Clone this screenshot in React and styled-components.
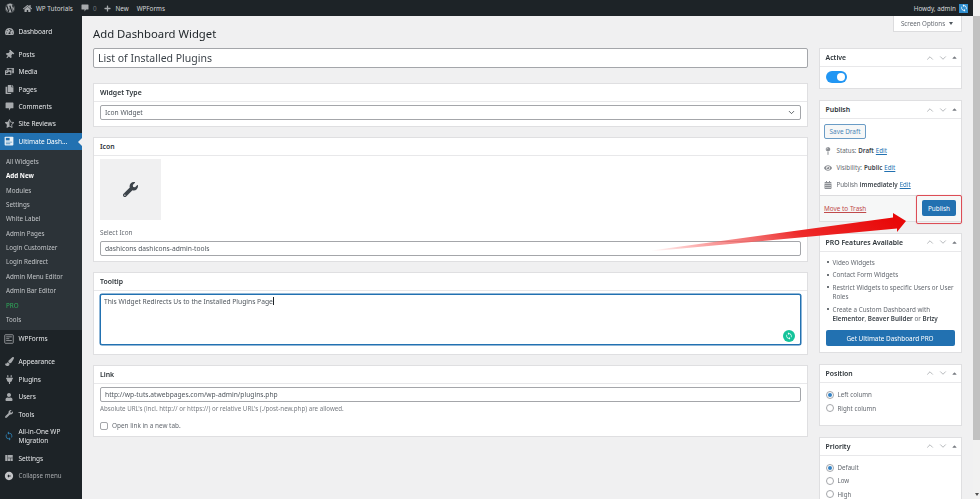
import React from "react";
import styled, { createGlobalStyle } from "styled-components";
import { ChevronUp, ChevronDown } from "lucide-react";
import {
  FaWordpress,
  FaHome,
  FaPlus,
  FaTachometerAlt,
  FaThumbtack,
  FaPhotoVideo,
  FaCopy,
  FaStarHalfAlt,
  FaWrench,
  FaPaintBrush,
  FaPlug,
  FaUser,
  FaEye,
  FaCalendarAlt,
  FaMapPin,
  FaCaretUp,
} from "react-icons/fa";
import { MdViewQuilt, MdSync, MdArrowCircleLeft } from "react-icons/md";

const GlobalStyle = createGlobalStyle`
  html, body { margin: 0; padding: 0; height: 499px; overflow: hidden; background: #f0f0f1; }
  body { font-family: "Noto Sans", "Open Sans", sans-serif; font-size: 7px; color: #3c434a; }
  * { box-sizing: border-box; }
`;

const CommentIcon = ({ size = 9 }) => (
  <svg viewBox="0 0 16 16" width={size} height={size} fill="currentColor">
    <path d="M2 1h12a1 1 0 0 1 1 1v8a1 1 0 0 1-1 1h-4l-3 4v-4H2a1 1 0 0 1-1-1V2a1 1 0 0 1 1-1z" />
  </svg>
);

const UltimateIcon = () => (
  <svg viewBox="0 0 16 16" width="10" height="10">
    <rect x="1" y="1" width="14" height="14" rx="1.5" fill="#e8f0f6" />
    <rect x="3" y="3" width="6" height="4" fill="#2271b1" />
    <path d="M3 9h10v1.4H3zM3 11.6h7V13H3z" fill="#5a93bf" />
  </svg>
);

const FormsIcon = () => (
  <svg viewBox="0 0 16 16" width="10" height="10" fill="none" stroke="currentColor" strokeWidth="1.3">
    <rect x="1.2" y="1.2" width="13.6" height="13.6" rx="1" />
    <path d="M3.5 4.5h9M3.5 7.5h5M3.5 10.5h9" />
  </svg>
);

const topMenu = [
  { label: "Posts", icon: <FaThumbtack size={9} />, tilt: true },
  { label: "Media", icon: <FaPhotoVideo size={9} /> },
  { label: "Pages", icon: <FaCopy size={9} /> },
  { label: "Comments", icon: <CommentIcon /> },
  { label: "Site Reviews", icon: <FaStarHalfAlt size={9} /> },
];

const subMenu = [
  "All Widgets",
  "Add New",
  "Modules",
  "Settings",
  "White Label",
  "Admin Pages",
  "Login Customizer",
  "Login Redirect",
  "Admin Menu Editor",
  "Admin Bar Editor",
  "PRO",
  "Tools",
];

const bottomMenu = [
  { label: "Appearance", icon: <FaPaintBrush size={9} /> },
  { label: "Plugins", icon: <FaPlug size={9} /> },
  { label: "Users", icon: <FaUser size={8} /> },
  { label: "Tools", icon: <FaWrench size={8} /> },
];

const Controls = () => (
  <HandleGroup>
    <ChevronUp size={10} strokeWidth={1.3} />
    <ChevronDown size={10} strokeWidth={1.3} />
    <FaCaretUp size={7} />
  </HandleGroup>
);

const App = () => {
  return (
    <Screen>
      <GlobalStyle />
      <Page>
        <AdminBar>
          <BarGroup>
            <BarIcon><FaWordpress size={10} /></BarIcon>
            <BarItem><FaHome size={9} /> WP Tutorials</BarItem>
            <BarItem><CommentIcon size={8} /> <Faint>0</Faint></BarItem>
            <BarItem><FaPlus size={7} /> New</BarItem>
            <BarItem>WPForms</BarItem>
          </BarGroup>
          <BarItem>
            Howdy, admin
            <Avatar><MdSync size={8} /></Avatar>
          </BarItem>
        </AdminBar>

        <Body>
          <Sidebar>
            <MenuItem>
              <Glyph><FaTachometerAlt size={9} /></Glyph>
              Dashboard
            </MenuItem>
            <MenuGap />
            {topMenu.map(({ label, icon, tilt }) => (
              <MenuItem key={label}>
                <Glyph $tilt={tilt}>{icon}</Glyph>
                {label}
              </MenuItem>
            ))}
            <MenuItem $active>
              <Glyph><UltimateIcon /></Glyph>
              Ultimate Dash...
              <ActiveNotch />
            </MenuItem>
            <SubMenu>
              {subMenu.map((label) => (
                <SubItem key={label} $current={label === "Add New"} $pro={label === "PRO"}>
                  {label}
                </SubItem>
              ))}
            </SubMenu>
            <MenuItem>
              <Glyph><FormsIcon /></Glyph>
              WPForms
            </MenuItem>
            <MenuGap />
            {bottomMenu.map(({ label, icon }) => (
              <MenuItem key={label}>
                <Glyph>{icon}</Glyph>
                {label}
              </MenuItem>
            ))}
            <MenuItem $tall>
              <Glyph $tint="#2f7fb0"><MdSync size={10} /></Glyph>
              <span>All-in-One WP<br />Migration</span>
            </MenuItem>
            <MenuItem>
              <Glyph><MdViewQuilt size={10} /></Glyph>
              Settings
            </MenuItem>
            <MenuItem $muted>
              <Glyph $tint="#c3c4c7"><MdArrowCircleLeft size={10} /></Glyph>
              Collapse menu
            </MenuItem>
          </Sidebar>

          <Content>
            <TopRow>
              <Heading>Add Dashboard Widget</Heading>
              <ScreenOptions>Screen Options<TabCaret /></ScreenOptions>
            </TopRow>
            <Columns>
              <MainColumn>
                <TitleInput>List of Installed Plugins</TitleInput>

                <Box>
                  <BoxHead>Widget Type</BoxHead>
                  <BoxBody $pad="3.5px 6px 6px">
                    <Field>
                      Icon Widget
                      <SelectCaret><ChevronDown size={9} strokeWidth={2} /></SelectCaret>
                    </Field>
                  </BoxBody>
                </Box>

                <Box>
                  <BoxHead>Icon</BoxHead>
                  <BoxBody $pad="3px 6px 5.5px">
                    <IconPreview><FaWrench size={15} /></IconPreview>
                    <FieldLabel>Select Icon</FieldLabel>
                    <Field>dashicons dashicons-admin-tools</Field>
                  </BoxBody>
                </Box>

                <Box>
                  <BoxHead>Tooltip</BoxHead>
                  <BoxBody $pad="3px 6px 9px">
                    <TextArea>
                      This Widget Redirects Us to the Installed Plugins Page<Caret />
                      <GrammarDot><MdSync size={8} /></GrammarDot>
                    </TextArea>
                  </BoxBody>
                </Box>

                <Box>
                  <BoxHead>Link</BoxHead>
                  <BoxBody $pad="3px 6px 6px">
                    <Field>http://wp-tuts.atwebpages.com/wp-admin/plugins.php</Field>
                    <Help>Absolute URL's (incl. http:// or https://) or relative URL's (./post-new.php) are allowed.</Help>
                    <CheckRow><CheckBox />Open link in a new tab.</CheckRow>
                  </BoxBody>
                </Box>
              </MainColumn>

              <SideColumn>
                <Box>
                  <SideHead>Active<Controls /></SideHead>
                  <BoxBody $pad="4px 6px 5px"><Toggle /></BoxBody>
                </Box>

                <Box>
                  <SideHead>Publish<Controls /></SideHead>
                  <BoxBody $pad="4.5px 4.5px 1.5px">
                    <SaveDraft>Save Draft</SaveDraft>
                    <MetaRow><FaMapPin size={8} />Status: <b>Draft</b> <Link>Edit</Link></MetaRow>
                    <MetaRow><FaEye size={8} />Visibility: <b>Public</b> <Link>Edit</Link></MetaRow>
                    <MetaRow><FaCalendarAlt size={8} />Publish <b>immediately</b> <Link>Edit</Link></MetaRow>
                  </BoxBody>
                  <PublishFooter>
                    <Trash>Move to Trash</Trash>
                    <PublishButton>Publish</PublishButton>
                    <Highlight />
                  </PublishFooter>
                </Box>

                <Box>
                  <SideHead>PRO Features Available<Controls /></SideHead>
                  <BoxBody $pad="6px 6px 5.5px">
                    <FeatureList>
                      <li>Video Widgets</li>
                      <li>Contact Form Widgets</li>
                      <li>Restrict Widgets to specific Users or User Roles</li>
                      <li>Create a Custom Dashboard with <b>Elementor</b>, <b>Beaver Builder</b> or <b>Brizy</b></li>
                    </FeatureList>
                    <ProButton>Get Ultimate Dashboard PRO</ProButton>
                  </BoxBody>
                </Box>

                <Box>
                  <SideHead>Position<Controls /></SideHead>
                  <BoxBody $pad="5.3px 6px 10px">
                    <RadioRow><Radio $on />Left column</RadioRow>
                    <RadioRow><Radio />Right column</RadioRow>
                  </BoxBody>
                </Box>

                <Box>
                  <SideHead>Priority<Controls /></SideHead>
                  <BoxBody $pad="5.5px 6px 10px">
                    <RadioRow $tight><Radio $on />Default</RadioRow>
                    <RadioRow $tight><Radio />Low</RadioRow>
                    <RadioRow $tight><Radio />High</RadioRow>
                  </BoxBody>
                </Box>
              </SideColumn>
            </Columns>
          </Content>
        </Body>

        <ArrowOverlay viewBox="0 0 300 50" width="300" height="50">
          <defs>
            <linearGradient id="arrowFade" x1="0" x2="1" y1="0.6" y2="0.4">
              <stop offset="0" stopColor="#ff3030" stopOpacity="0" />
              <stop offset="0.35" stopColor="#f26a6a" stopOpacity="0.85" />
              <stop offset="0.6" stopColor="#ee2a2a" />
              <stop offset="1" stopColor="#e80808" />
            </linearGradient>
          </defs>
          <polygon points="8,46 268,10.5 268,6 281,14 272,25 272,21.5" fill="url(#arrowFade)" />
        </ArrowOverlay>
      </Page>

      <ScrollTrack>
        <ScrollThumb />
        <ScrollArrow />
      </ScrollTrack>
    </Screen>
  );
};

export default App;

const Screen = styled.div`
  display: flex;
  width: 980px;
  height: 499px;
  overflow: hidden;
  filter: blur(0.45px);
`;

const Page = styled.div`
  position: relative;
  display: flex;
  flex-direction: column;
  width: 973px;
  height: 499px;
`;

const AdminBar = styled.div`
  display: flex;
  align-items: center;
  justify-content: space-between;
  flex: 0 0 16px;
  padding: 0 5px;
  background: #1d2327;
  color: #d5d8da;
  font-size: 6.3px;
`;

const BarGroup = styled.div`
  display: flex;
  align-items: center;
  gap: 8px;
`;

const BarIcon = styled.span`
  display: flex;
  color: #a7aaad;
`;

const BarItem = styled.span`
  display: flex;
  align-items: center;
  gap: 4px;
  svg { color: #a7aaad; }
`;

const Faint = styled.span`
  color: #6f767b;
`;

const Avatar = styled.span`
  display: flex;
  align-items: center;
  justify-content: center;
  width: 9px;
  height: 9px;
  margin-left: -1px;
  background: #2f8fd0;
  svg { color: #fff; }
`;

const Body = styled.div`
  display: flex;
  flex: 1;
  min-height: 0;
`;

const Sidebar = styled.nav`
  flex: 0 0 82px;
  padding-top: 6.5px;
  background: #1d2327;
  color: #e6e8ea;
`;

const MenuGap = styled.div`
  height: 5.5px;
`;

const MenuItem = styled.div`
  position: relative;
  display: flex;
  align-items: center;
  gap: 4.5px;
  height: ${(p) => (p.$tall ? "26.5px" : "17.45px")};
  padding-left: 4px;
  line-height: 9px;
  font-size: ${(p) => (p.$muted ? "6.2px" : "6.5px")};
  background: ${(p) => (p.$active ? "#2271b1" : "transparent")};
  color: ${(p) => (p.$active ? "#fff" : p.$muted ? "#a7aaad" : "inherit")};
`;

const Glyph = styled.span`
  display: flex;
  justify-content: center;
  flex: 0 0 10px;
  color: ${(p) => p.$tint || "#a7aaad"};
  transform: ${(p) => (p.$tilt ? "rotate(40deg)" : "none")};
`;

const ActiveNotch = styled.span`
  position: absolute;
  right: 0;
  top: 5px;
  border: 4px solid transparent;
  border-right-color: #f0f0f1;
`;

const SubMenu = styled.div`
  padding: 4px 0 3.5px;
  background: #2c3338;
`;

const SubItem = styled.div`
  display: flex;
  align-items: center;
  height: 14.4px;
  padding-left: 6px;
  font-size: 6.25px;
  font-weight: ${(p) => (p.$current ? 700 : 400)};
  color: ${(p) => (p.$pro ? "#2fae5b" : p.$current ? "#fff" : "#c3c6c9")};
`;

const Content = styled.main`
  flex: 1;
  padding-left: 11px;
  min-width: 0;
`;

const TopRow = styled.div`
  display: flex;
  justify-content: space-between;
  align-items: flex-start;
  width: 868.5px;
  height: 32px;
`;

const Heading = styled.h1`
  margin: 10px 0 0;
  font-size: 11.3px;
  line-height: 16px;
  font-weight: 400;
  color: #1d2327;
`;

const ScreenOptions = styled.div`
  display: flex;
  align-items: center;
  justify-content: center;
  gap: 4px;
  width: 69px;
  height: 16px;
  background: #fff;
  border: 1px solid #dcdcde;
  border-top: none;
  color: #646970;
  font-size: 6.2px;
`;

const TabCaret = styled.span`
  border: 2px solid transparent;
  border-top: 3px solid #50575e;
  border-bottom: none;
`;

const Columns = styled.div`
  display: grid;
  grid-template-columns: 715px 143px;
  column-gap: 10.5px;
  align-items: start;
`;

const MainColumn = styled.div`
  display: flex;
  flex-direction: column;
  gap: 10px;
`;

const SideColumn = styled.div`
  display: flex;
  flex-direction: column;
  gap: 11px;
`;

const TitleInput = styled.div`
  display: flex;
  align-items: center;
  height: 20px;
  margin-bottom: 4.5px;
  padding: 0 4px;
  background: #fff;
  border: 1px solid #a4a6aa;
  border-radius: 2px;
  font-size: 10.5px;
  color: #3c434a;
`;

const Box = styled.section`
  background: #fff;
  border: 1px solid #dfdfe1;
`;

const BoxHead = styled.h2`
  display: flex;
  align-items: center;
  height: 18px;
  margin: 0;
  padding: 0 6px;
  border-bottom: 1px solid #e8e8ea;
  font-size: 6.9px;
  font-weight: 600;
  color: #2c3338;
`;

const SideHead = styled(BoxHead)`
  justify-content: space-between;
  padding-right: 3px;
`;

const HandleGroup = styled.span`
  display: flex;
  align-items: center;
  gap: 3px;
  color: #787c82;
`;

const BoxBody = styled.div`
  padding: ${(p) => p.$pad};
`;

const Field = styled.div`
  display: flex;
  align-items: center;
  justify-content: space-between;
  height: 15px;
  padding: 0 4px;
  background: #fff;
  border: 1px solid #a4a6aa;
  border-radius: 2px;
  color: #50575e;
  font-size: 6.7px;
`;

const SelectCaret = styled.span`
  display: flex;
  color: #2c3338;
`;

const IconPreview = styled.div`
  display: flex;
  align-items: center;
  justify-content: center;
  width: 61px;
  height: 61px;
  background: #f0f0f1;
  color: #3c434a;
`;

const FieldLabel = styled.div`
  margin-top: 9px;
  margin-bottom: 3.5px;
  line-height: 8px;
  color: #646970;
  font-size: 6.4px;
`;

const TextArea = styled.div`
  position: relative;
  height: 51px;
  padding: 2px 3px;
  background: #fff;
  border: 1px solid #2271b1;
  border-radius: 2px;
  box-shadow: 0 0 0 0.5px #2271b1;
  font-size: 6.7px;
  line-height: 10px;
  color: #50575e;
`;

const Caret = styled.span`
  display: inline-block;
  width: 1px;
  height: 8px;
  vertical-align: -1px;
  background: #1d2327;
`;

const GrammarDot = styled.span`
  position: absolute;
  right: 5px;
  bottom: 2px;
  display: flex;
  align-items: center;
  justify-content: center;
  width: 12px;
  height: 12px;
  border-radius: 50%;
  background: #15c39a;
  color: #fff;
`;

const Help = styled.p`
  margin: 1.5px 0 0;
  line-height: 9px;
  font-size: 6.2px;
  color: #787c82;
`;

const CheckRow = styled.div`
  display: flex;
  align-items: center;
  gap: 4px;
  margin-top: 9.5px;
  line-height: 8px;
  color: #646970;
  font-size: 6.4px;
`;

const CheckBox = styled.span`
  width: 8px;
  height: 8px;
  background: #fff;
  border: 1px solid #a4a6aa;
  border-radius: 2px;
`;

const Toggle = styled.span`
  position: relative;
  display: block;
  width: 21px;
  height: 12px;
  border-radius: 6px;
  background: #2196f3;
  &::after {
    content: "";
    position: absolute;
    right: 2px;
    top: 2px;
    width: 8px;
    height: 8px;
    border-radius: 50%;
    background: #fff;
  }
`;

const SaveDraft = styled.div`
  display: flex;
  align-items: center;
  justify-content: center;
  width: 42px;
  height: 15.5px;
  margin-bottom: 3px;
  background: #f6f7f7;
  border: 1px solid #6a9cc6;
  border-radius: 2px;
  color: #4a86b8;
  font-size: 6.4px;
`;

const MetaRow = styled.div`
  display: flex;
  align-items: center;
  gap: 2px;
  height: 17px;
  font-size: 6.2px;
  color: #646970;
  svg { margin-right: 2.5px; color: #8c8f94; }
  b { font-weight: 600; color: #3c434a; }
`;

const Link = styled.span`
  color: #2271b1;
  text-decoration: underline;
`;

const PublishFooter = styled.div`
  position: relative;
  display: flex;
  align-items: center;
  justify-content: space-between;
  height: 26px;
  padding: 0 4.5px;
  border-top: 1px solid #dcdcde;
  background: #f6f7f7;
`;

const Trash = styled.span`
  color: #c04a4b;
  text-decoration: underline;
  font-size: 6.4px;
`;

const PublishButton = styled.span`
  display: flex;
  align-items: center;
  justify-content: center;
  width: 34px;
  height: 16.5px;
  background: #2271b1;
  border-radius: 2px;
  color: #fff;
  font-size: 6.4px;
`;

const Highlight = styled.span`
  position: absolute;
  right: -1.5px;
  top: -1px;
  width: 46px;
  height: 29px;
  border: 1.2px solid #dc4d56;
  border-radius: 2px;
  box-shadow: 0 0 1px rgba(217, 52, 59, 0.5);
`;

const FeatureList = styled.ul`
  margin: 0 0 6.7px;
  padding: 0 0 0 7px;
  list-style: none;
  font-size: 6.3px;
  line-height: 9.5px;
  color: #646970;
  li { position: relative; margin-bottom: 3px; }
  li::before {
    content: "";
    position: absolute;
    left: -6px;
    top: 3.5px;
    width: 2px;
    height: 2px;
    border-radius: 50%;
    background: #3c434a;
  }
  b { font-weight: 600; color: #3c434a; }
`;

const ProButton = styled.div`
  display: flex;
  align-items: center;
  justify-content: center;
  height: 16px;
  background: #2271b1;
  border-radius: 2px;
  color: #fff;
  font-size: 6.4px;
`;

const RadioRow = styled.div`
  display: flex;
  align-items: center;
  gap: 4px;
  height: ${(p) => (p.$tight ? "13.1px" : "13.4px")};
  color: #646970;
  font-size: 6.2px;
`;

const Radio = styled.span`
  display: flex;
  align-items: center;
  justify-content: center;
  width: 8px;
  height: 8px;
  border: 1px solid #a4a6aa;
  border-radius: 50%;
  background: #fff;
  &::after {
    content: "";
    display: ${(p) => (p.$on ? "block" : "none")};
    width: 4px;
    height: 4px;
    border-radius: 50%;
    background: #3582c4;
  }
`;

const ArrowOverlay = styled.svg`
  position: absolute;
  left: 625px;
  top: 207px;
  pointer-events: none;
`;

const ScrollTrack = styled.div`
  position: relative;
  flex: 0 0 7px;
  padding-top: 16px;
  background: #f1f1f1;
`;

const ScrollThumb = styled.div`
  height: 424px;
  background: #c1c1c1;
`;

const ScrollArrow = styled.span`
  position: absolute;
  left: 2px;
  bottom: 3px;
  border: 2px solid transparent;
  border-top: 3px solid #505050;
  border-bottom: none;
`;
